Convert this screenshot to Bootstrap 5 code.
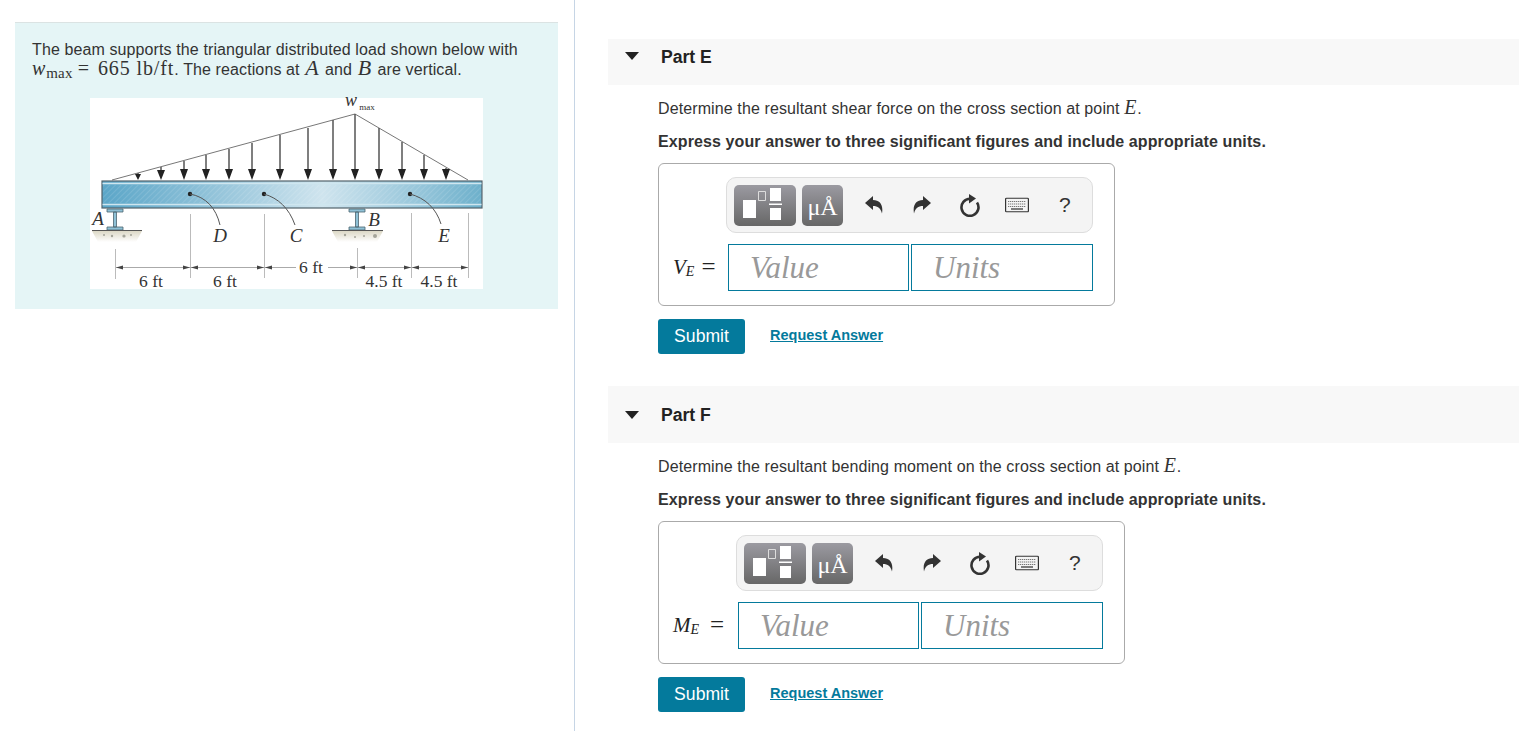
<!DOCTYPE html>
<html lang="en">
<head>
<meta charset="utf-8">
<title>Beam problem</title>
<link href="https://cdn.jsdelivr.net/npm/bootstrap@5.3.0/dist/css/bootstrap.min.css" rel="stylesheet">
<style>
html,body{height:731px;overflow:hidden;background:#fff}
body{font-family:"Liberation Sans",Arial,sans-serif;font-size:16px;line-height:24px;color:#333}
.left-pane{width:575px;height:731px;flex:none;border-right:1px solid #c6d5e5;padding:22px 16px 0 15px}
.info-box{height:287px;background:#e5f5f6;border-top:1px solid #dbe3e3;padding:17px 17px 0}
.info-text{line-height:20px;margin:0;letter-spacing:.11px;white-space:nowrap}
.math{font-family:"Liberation Serif",serif;font-size:20px;line-height:0;letter-spacing:.9px}
.math i{font-family:"Liberation Serif",serif}
.math sub{font-size:15px;line-height:0;bottom:0;vertical-align:-3px;letter-spacing:.2px}
.math-eq{margin:0 8px 0 5px}
.math-cap{font-size:22px;margin:0 1px 0 1px}
.beam-figure{display:block;width:393px;height:191px;margin:18px 0 0 58px;background:#fff;overflow:visible}
.right-pane{padding-top:39px;min-width:0;margin-left:33px}
.part-head{background:#f8f8f8;height:46px;font-weight:700;font-size:17.6px;color:#222;padding:6px 0 0 53px;position:relative}
.part-head.tall{height:57px;padding-top:17px}
.caret-down{position:absolute;left:17px;top:13px;width:14px;height:8px}
.part-head.tall .caret-down{top:25px}
.part-body{padding-left:50px;letter-spacing:.11px}
.part-body p{margin:0 0 9px}
.part-body p:first-child{padding-top:12px}
.answer-box{border:1px solid #aaa;border-radius:6px;padding:13px 21px 14px 14px;margin-top:0;letter-spacing:0}
.tool-bar{width:367px;height:56px;background:#f4f4f4;border:1px solid #ddd;border-radius:10px;padding-left:7px;margin-bottom:11px}
.tpl-btn{height:41px;border-radius:5px;background:linear-gradient(#9b9aa1,#676767);flex:none;display:flex;align-items:center;justify-content:center}
.tpl-a{width:62px}
.tpl-b{width:41px;margin-left:6px;color:#fff;font-family:"Liberation Serif",serif;font-size:24px;line-height:1;padding-top:3px}
.tool-ic{position:absolute;top:50%;transform:translateY(-50%);color:#333;display:block}
.ic1{left:138px}.ic2{left:186px}.ic3{left:232px}.ic4{left:278px}
.tool-q{position:absolute;left:332px;font-size:21px;color:#333;line-height:20px;top:17px}
.eq-label{font-family:"Liberation Serif",serif;font-size:21px;color:#222;white-space:nowrap;line-height:47px;height:47px}
.eq-label sub{font-size:14px;bottom:-.15em;line-height:0}
.eq-sign{font-size:25px;line-height:0;margin-left:7px;vertical-align:-1px}
.lab-m .eq-sign{margin-left:11px}
.lab-v{width:55px}.lab-m{width:65px}
.ans-input{border:1px solid #047a9c;border-radius:0;height:47px;padding:0 0 0 21px;font-family:"Liberation Serif",serif;font-style:italic;font-size:31px;background:#fff;box-shadow:none;flex:none}
.ans-input::placeholder{color:#999;opacity:1}
.w-val{width:181px;margin-right:2px}.w-uni{width:182px}
.submit-row{margin-top:13px;margin-bottom:32px}
.btn-submit{background:#047a9c;border:0;border-radius:3px;color:#fff;width:87px;height:35px;padding:0;font-size:17.6px;font-family:inherit;letter-spacing:0}
.link-req{margin-left:25px;padding-bottom:3px;color:#047a9c;font-weight:700;font-size:14.5px;letter-spacing:0}
svg text{font-family:"Liberation Serif",serif;fill:#333}
</style>
</head>
<body>
<svg width="0" height="0" class="position-absolute">
  <defs>
    <linearGradient id="beamfill" x1="0" x2="1" y1="0" y2="0">
      <stop offset="0" stop-color="#5ba6c8"/><stop offset=".3" stop-color="#94c4da"/><stop offset=".58" stop-color="#cfe4ee"/><stop offset=".85" stop-color="#93c4d9"/><stop offset="1" stop-color="#6db0cb"/>
    </linearGradient>
    <pattern id="beamhatch" width="4" height="4" patternUnits="userSpaceOnUse" patternTransform="rotate(45)"><path d="M0 0V4" stroke="#fff" stroke-opacity=".16" stroke-width="1.500"/></pattern>
    <linearGradient id="soil" x1="0" x2="0" y1="0" y2="1"><stop offset="0" stop-color="#dcd8c6"/><stop offset="1" stop-color="#fff"/></linearGradient>
    <symbol id="ic-undo" viewBox="0 0 18 18"><path fill="currentColor" d="M0 7 8 0V4C15 4 18.500 9 17 17.500 15.500 12 13 10 8 10V14Z"/></symbol>
    <symbol id="ic-redo" viewBox="0 0 18 18"><path fill="currentColor" d="M18 7 10 0V4C3 4-.5 9 1 17.500 2.500 12 5 10 10 10V14Z"/></symbol>
    <symbol id="ic-reset" viewBox="0 0 22 24"><path fill="none" stroke="currentColor" stroke-width="2.600" d="M18 9.500A8.500 8.500 0 1 1 11 5.800"/><path fill="currentColor" d="M10 1 17 5.500 10 10.500Z"/></symbol>
    <symbol id="ic-keys" viewBox="0 0 24 15"><rect x=".6" y=".6" width="22.800" height="13.800" rx="1" fill="#f4f4f4" stroke="#333" stroke-width="1.200"/><path stroke="#777" stroke-width="1.200" stroke-dasharray="1.300 .7" d="M3 4h18M3 6.500h18M3 9h18"/><path stroke="#555" stroke-width="1.400" d="M6 11.500h12"/></symbol>
    <symbol id="ic-tpl" viewBox="0 0 62 41"><path fill="#fff" d="M9 15h13v18H9zM36 3h11v13H36zM36 23h11v12H36z"/><path fill="#fff" d="M35 18.500h13v1.500H35z"/><path fill="none" stroke="#ddd" d="M24.500 6.500h7v9h-7z"/></symbol>
  </defs>
</svg>
<main class="d-flex">
  <section class="left-pane">
    <div class="info-box">
      <p class="info-text">The beam supports the triangular distributed load shown below with<br><span class="math"><i>w</i><sub>max</sub><span class="math-eq">=</span>665 lb/ft</span>. The reactions at <span class="math"><i class="math-cap">A</i></span> and <span class="math"><i class="math-cap">B</i></span> are vertical.</p>
      <svg class="beam-figure" viewBox="90 98 393 191" role="img" aria-label="Beam with triangular load">
        <path d="M112 180 355 114 468 180" fill="none" stroke="#777" stroke-width="1"/>
        <g stroke="#555" stroke-width="1.500">
          <path d="M138 173V176M161 167V176M184 161V176M206 155V176M229 149V176M252 143V176M280 135V176M308 128V176M333 120V176M355 114V176M379 128V176M402 142V176M424 155V176M446 168V176"/>
        </g>
        <path fill="#222" d="M135 174h6l-3 6zM157 170h8l-4 10zM180 169h8l-4 11zM202 169h8l-4 11zM225 169h8l-4 11zM248 169h8l-4 11zM276 169h8l-4 11zM304 169h8l-4 11zM329 169h8l-4 11zM351 169h8l-4 11zM375 169h8l-4 11zM398 169h8l-4 11zM420 169h8l-4 11zM442 169h8l-4 11z"/>
        <rect x="102" y="181" width="380" height="27" fill="url(#beamfill)" stroke="#53636b" stroke-width="1.200"/>
        <rect x="103" y="185" width="378" height="18" fill="url(#beamhatch)"/>
        <path d="M102.500 183.500h379M102.500 204.500h379" stroke="#cfe6ef" stroke-width="1.400"/>
        <g fill="#8fc1d6" stroke="#4b6570" stroke-width=".8">
          <path d="M107 209h16v3h-16zM113.500 212h3v15h-3zM107 227h16v3h-16z"/>
          <path d="M349 209h16v3h-16zM355.500 212h3v15h-3zM349 227h16v3h-16z"/>
        </g>
        <g fill="url(#soil)">
          <path d="M92 231h50l-6 11H98zM332 231h51l-6 11h-39z"/>
        </g>
        <path d="M92 230.500h50M332 230.500h51" stroke="#555" stroke-width="1.200"/>
        <g fill="#a5a59a"><circle cx="104" cy="235" r="1"/><circle cx="112" cy="236" r="1.200"/><circle cx="124" cy="236" r="1.600"/><circle cx="131" cy="235" r="1"/><circle cx="345" cy="235" r="1.200"/><circle cx="355" cy="237" r="1"/><circle cx="364" cy="236" r="1"/><circle cx="375" cy="236" r="2"/></g>
        <g fill="#222"><circle cx="190" cy="194" r="2.200"/><circle cx="264" cy="194" r="2.200"/><circle cx="410" cy="194" r="2.200"/></g>
        <path d="M190 194C206 197 216 208 220 225M264 194C278 198 289 208 295 225M410 194C425 198 436 208 441 224" fill="none" stroke="#555"/>
        <path d="M190.500 214V278M264.500 214V278M115.500 249V279M357.500 248V278M411.500 213V278M468.500 213V278" stroke="#bbb" fill="none"/>
        <path d="M116 267.500H296M328 267.500H468" stroke="#aaa" fill="none"/>
        <path fill="#444" d="M116 267.500l7-2v4zM190 267.500l-7-2v4zM191 267.500l7-2v4zM264 267.500l-7-2v4zM265 267.500l7-2v4zM357 267.500l-7-2v4zM358 267.500l7-2v4zM411 267.500l-7-2v4zM412 267.500l7-2v4zM468 267.500l-7-2v4z"/>
        <g font-size="19" font-style="italic" text-anchor="middle">
          <text x="98" y="225">A</text><text x="374" y="226">B</text><text x="220" y="242">D</text><text x="296" y="242">C</text><text x="444" y="242">E</text>
        </g>
        <text x="351" y="106" font-size="18" font-style="italic" text-anchor="middle">w</text>
        <text x="367" y="110" font-size="9" text-anchor="middle">max</text>
        <g font-size="17.500" text-anchor="middle">
          <text x="151" y="287">6 ft</text><text x="225" y="287">6 ft</text><text x="311" y="273">6 ft</text><text x="384" y="287">4.5 ft</text><text x="439" y="287">4.5 ft</text>
        </g>
      </svg>
    </div>
  </section>
  <section class="right-pane flex-grow-1">
    <header class="part-head">
      <svg class="caret-down" viewBox="0 0 14 8"><path d="M0 0h14L7 8z" fill="#222"/></svg>Part E
    </header>
    <div class="part-body">
      <p>Determine the resultant shear force on the cross section at point <span class="math"><i>E</i></span>.</p>
      <p class="fw-bold">Express your answer to three significant figures and include appropriate units.</p>
      <div class="answer-box d-inline-flex flex-column align-items-end">
        <div class="tool-bar d-flex align-items-center position-relative">
          <span class="tpl-btn tpl-a"><svg width="62" height="41"><use href="#ic-tpl"/></svg></span>
          <span class="tpl-btn tpl-b">μÅ</span>
          <svg class="tool-ic ic1" width="18" height="18"><use href="#ic-undo"/></svg>
          <svg class="tool-ic ic2" width="18" height="18"><use href="#ic-redo"/></svg>
          <svg class="tool-ic ic3" width="22" height="24"><use href="#ic-reset"/></svg>
          <svg class="tool-ic ic4" width="24" height="15"><use href="#ic-keys"/></svg>
          <span class="tool-q">?</span>
        </div>
        <div class="d-flex">
          <span class="eq-label lab-v"><i>V<sub>E</sub></i><span class="eq-sign">=</span></span>
          <input class="form-control ans-input w-val" placeholder="Value" aria-label="Value">
          <input class="form-control ans-input w-uni" placeholder="Units" aria-label="Units">
        </div>
      </div>
      <div class="submit-row d-flex align-items-center">
        <button type="button" class="btn btn-submit">Submit</button>
        <a href="#" class="link-req">Request Answer</a>
      </div>
    </div>
    <header class="part-head tall">
      <svg class="caret-down" viewBox="0 0 14 8"><path d="M0 0h14L7 8z" fill="#222"/></svg>Part F
    </header>
    <div class="part-body">
      <p>Determine the resultant bending moment on the cross section at point <span class="math"><i>E</i></span>.</p>
      <p class="fw-bold">Express your answer to three significant figures and include appropriate units.</p>
      <div class="answer-box d-inline-flex flex-column align-items-end">
        <div class="tool-bar d-flex align-items-center position-relative">
          <span class="tpl-btn tpl-a"><svg width="62" height="41"><use href="#ic-tpl"/></svg></span>
          <span class="tpl-btn tpl-b">μÅ</span>
          <svg class="tool-ic ic1" width="18" height="18"><use href="#ic-undo"/></svg>
          <svg class="tool-ic ic2" width="18" height="18"><use href="#ic-redo"/></svg>
          <svg class="tool-ic ic3" width="22" height="24"><use href="#ic-reset"/></svg>
          <svg class="tool-ic ic4" width="24" height="15"><use href="#ic-keys"/></svg>
          <span class="tool-q">?</span>
        </div>
        <div class="d-flex">
          <span class="eq-label lab-m"><i>M<sub>E</sub></i><span class="eq-sign">=</span></span>
          <input class="form-control ans-input w-val" placeholder="Value" aria-label="Value">
          <input class="form-control ans-input w-uni" placeholder="Units" aria-label="Units">
        </div>
      </div>
      <div class="submit-row d-flex align-items-center">
        <button type="button" class="btn btn-submit">Submit</button>
        <a href="#" class="link-req">Request Answer</a>
      </div>
    </div>
  </section>
</main>
</body>
</html>
